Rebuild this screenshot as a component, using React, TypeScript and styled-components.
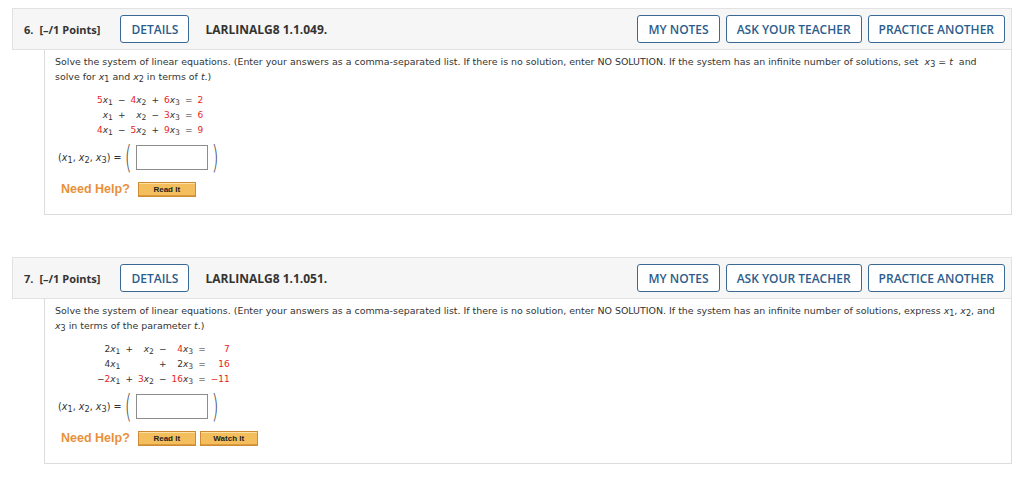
import styled, { createGlobalStyle } from "styled-components";

const GlobalStyle = createGlobalStyle`
    body {
        margin: 0;
        background: #ffffff;
        font-family: "DejaVu Sans", Verdana, sans-serif;
        color: #333333;
    }
`;

type Cell = { text?: string; red?: boolean; variable?: boolean; sub?: string };
type Row = Cell[][];

const q6: Row[] = [
    [
        [{ text: "5", red: true }, { variable: true, sub: "1" }],
        [{ text: "−" }],
        [{ text: "4", red: true }, { variable: true, sub: "2" }],
        [{ text: "+" }],
        [{ text: "6", red: true }, { variable: true, sub: "3" }],
        [{ text: "=" }],
        [{ text: "2", red: true }],
    ],
    [
        [{ variable: true, sub: "1" }],
        [{ text: "+" }],
        [{ variable: true, sub: "2" }],
        [{ text: "−" }],
        [{ text: "3", red: true }, { variable: true, sub: "3" }],
        [{ text: "=" }],
        [{ text: "6", red: true }],
    ],
    [
        [{ text: "4", red: true }, { variable: true, sub: "1" }],
        [{ text: "−" }],
        [{ text: "5", red: true }, { variable: true, sub: "2" }],
        [{ text: "+" }],
        [{ text: "9", red: true }, { variable: true, sub: "3" }],
        [{ text: "=" }],
        [{ text: "9", red: true }],
    ],
];

const q7: Row[] = [
    [
        [{ text: "2" }, { variable: true, sub: "1" }],
        [{ text: "+" }],
        [{ variable: true, sub: "2" }],
        [{ text: "−" }],
        [{ text: "4", red: true }, { variable: true, sub: "3" }],
        [{ text: "=" }],
        [{ text: "7", red: true }],
    ],
    [
        [{ text: "4" }, { variable: true, sub: "1" }],
        [],
        [],
        [{ text: "+" }],
        [{ text: "2" }, { variable: true, sub: "3" }],
        [{ text: "=" }],
        [{ text: "16", red: true }],
    ],
    [
        [{ text: "−" }, { text: "2", red: true }, { variable: true, sub: "1" }],
        [{ text: "+" }],
        [{ text: "3", red: true }, { variable: true, sub: "2" }],
        [{ text: "−" }],
        [{ text: "16", red: true }, { variable: true, sub: "3" }],
        [{ text: "=" }],
        [{ text: "−11", red: true }],
    ],
];

const V = ({ n }: { n: string }) => (
    <Var>
        x<sub>{n}</sub>
    </Var>
);

const renderCell = (cell: Cell[]) =>
    cell.map((c, i) =>
        c.variable ? (
            <V key={i} n={c.sub || ""} />
        ) : (
            <Num key={i} $red={c.red}>
                {c.text}
            </Num>
        )
    );

const Equations = ({ rows, indent }: { rows: Row[]; indent: number }) => (
    <EqTable $indent={indent}>
        <tbody>
            {rows.map((row, r) => (
                <tr key={r}>
                    {row.map((cell, c) => (
                        <EqCell key={c} $op={c % 2 === 1}>
                            {renderCell(cell)}
                        </EqCell>
                    ))}
                </tr>
            ))}
        </tbody>
    </EqTable>
);

type QuestionProps = {
    number: string;
    code: string;
    prompt: React.ReactNode;
    rows: Row[];
    indent: number;
    watch?: boolean;
};

const Question = ({ number, code, prompt, rows, indent, watch }: QuestionProps) => (
    <QuestionWrapper>
        <Header>
            <Number>{number}</Number>
            <Points>[–/1 Points]</Points>
            <OutlineButton>DETAILS</OutlineButton>
            <Code>{code}</Code>
            <Actions>
                <OutlineButton>MY NOTES</OutlineButton>
                <OutlineButton>ASK YOUR TEACHER</OutlineButton>
                <OutlineButton>PRACTICE ANOTHER</OutlineButton>
            </Actions>
        </Header>
        <Body>
            <Prompt>{prompt}</Prompt>
            <Equations rows={rows} indent={indent} />
            <AnswerRow>
                <span>
                    (<V n="1" />, <V n="2" />, <V n="3" />) =
                </span>
                <Paren>(</Paren>
                <AnswerInput type="text" />
                <Paren>)</Paren>
            </AnswerRow>
            <HelpRow>
                <NeedHelp>Need Help?</NeedHelp>
                <HelpButton>Read It</HelpButton>
                {watch && <HelpButton>Watch It</HelpButton>}
            </HelpRow>
        </Body>
    </QuestionWrapper>
);

const App = () => (
    <Page>
        <GlobalStyle />
        <Question
            number="6."
            code="LARLINALG8 1.1.049."
            rows={q6}
            indent={42}
            prompt={
                <>
                    Solve the system of linear equations. (Enter your answers as a comma-separated list. If
                    there is no solution, enter NO SOLUTION. If the system has an infinite number of solutions,
                    set&nbsp; <V n="3" /> = <i>t</i>&nbsp; and
                    <br />
                    solve for <V n="1" /> and <V n="2" /> in terms of <i>t</i>.)
                </>
            }
        />
        <Question
            number="7."
            code="LARLINALG8 1.1.051."
            rows={q7}
            indent={42}
            watch
            prompt={
                <>
                    Solve the system of linear equations. (Enter your answers as a comma-separated list. If
                    there is no solution, enter NO SOLUTION. If the system has an infinite number of solutions,
                    express <V n="1" />, <V n="2" />, and
                    <br />
                    <V n="3" /> in terms of the parameter <i>t</i>.)
                </>
            }
        />
    </Page>
);

export default App;

const Page = styled.div`
    padding: 8px 12px;
    width: 1000px;
`;

const QuestionWrapper = styled.div`
    margin-bottom: 42px;
`;

const Header = styled.div`
    display: flex;
    align-items: center;
    height: 40px;
    padding: 0 6px 0 11px;
    background: #f6f6f6;
    border: 1px solid #e2e2e2;
    font-family: "Open Sans", sans-serif;
`;

const Number = styled.span`
    font-size: 11px;
    font-weight: 700;
    color: #333;
    margin-right: 6px;
`;

const Points = styled.span`
    font-size: 11px;
    font-weight: 700;
    color: #333;
    margin-right: 20px;
`;

const OutlineButton = styled.button`
    height: 28px;
    padding: 0 10px;
    background: #ffffff;
    border: 1.5px solid #3b6996;
    border-radius: 3px;
    color: #2b5d8c;
    font-family: "Open Sans", sans-serif;
    font-size: 12px;
    font-weight: 600;
    cursor: pointer;
`;

const Code = styled.span`
    margin-left: 16px;
    font-size: 12px;
    font-weight: 700;
    color: #333;
`;

const Actions = styled.div`
    margin-left: auto;
    display: flex;
    gap: 6px;
`;

const Body = styled.div`
    margin-left: 32px;
    padding: 4px 4px 17px 10px;
    border: 1px solid #dcdcdc;
    border-top: none;
    font-family: "DejaVu Sans", Verdana, sans-serif;
    font-size: 9.45px;
    line-height: 15px;
`;

const Prompt = styled.p`
    margin: 0 0 9px;
    color: #333;
`;

const Var = styled.i`
    font-family: "DejaVu Sans", Verdana, sans-serif;
    font-style: italic;
    color: #333;
    sub {
        font-style: normal;
        font-size: 0.85em;
        vertical-align: -2px;
        line-height: 0;
    }
`;

const Num = styled.span<{ $red?: boolean }>`
    color: ${(p) => (p.$red ? "#e8251c" : "#333")};
`;

const EqTable = styled.table<{ $indent: number }>`
    border-collapse: collapse;
    margin-left: ${(p) => p.$indent}px;
    font-family: "DejaVu Sans", Verdana, sans-serif;
    font-size: 9px;
`;

const EqCell = styled.td<{ $op?: boolean }>`
    padding: 0 ${(p) => (p.$op ? "5px" : "0")};
    height: 15px;
    text-align: ${(p) => (p.$op ? "center" : "right")};
    line-height: 15px;
    white-space: nowrap;
`;

const AnswerRow = styled.div`
    display: flex;
    align-items: center;
    margin: 3px 0 0 3px;
    color: #333;
    font-size: 9.6px;
`;

const Paren = styled.span`
    font-family: "DejaVu Sans", sans-serif;
    font-weight: 300;
    font-size: 32px;
    line-height: 32px;
    color: #444;
    margin: 0 1px;
    transform: scaleX(0.55);
`;

const AnswerInput = styled.input`
    width: 72px;
    height: 25px;
    box-sizing: border-box;
    border: 1px solid #8c8c8c;
    margin: 0;
`;

const HelpRow = styled.div`
    display: flex;
    align-items: center;
    gap: 4px;
    margin: 9px 0 0 6px;
`;

const NeedHelp = styled.span`
    font-family: "Liberation Sans", Arial, sans-serif;
    font-weight: 700;
    font-size: 12.5px;
    color: #e8913a;
    margin-right: 4px;
`;

const HelpButton = styled.span`
    display: inline-flex;
    align-items: center;
    justify-content: center;
    width: 58px;
    height: 15px;
    box-sizing: border-box;
    background: #f4be5c;
    border: 1px solid #cf8a34;
    box-shadow: inset 0 1px 0 #fbe0a6, inset 0 -1px 0 #d99b3f;
    font-family: "Liberation Sans", Arial, sans-serif;
    font-weight: 700;
    font-size: 8px;
    color: #222;
`;
